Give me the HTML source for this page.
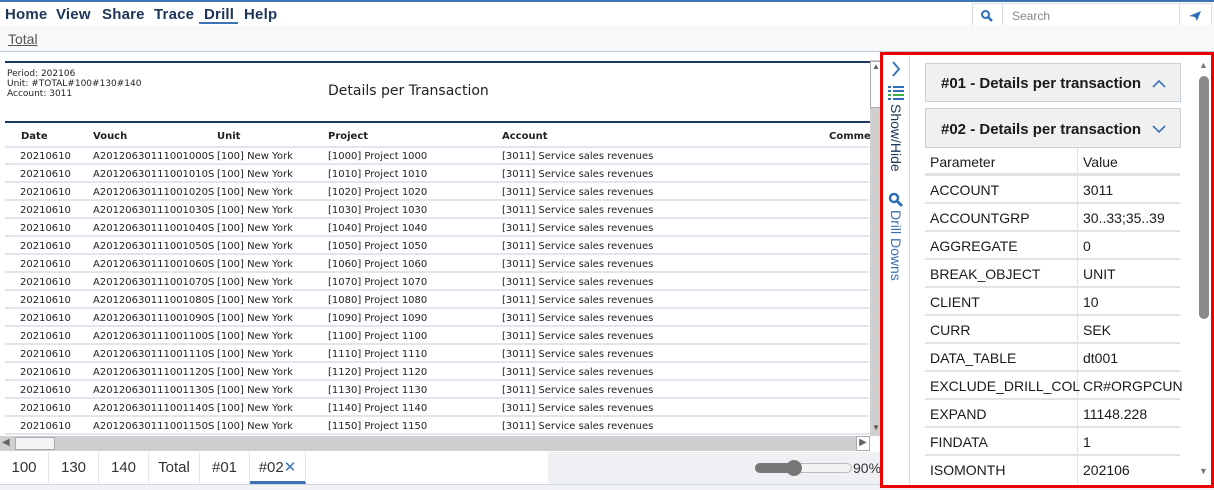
<!DOCTYPE html>
<html><head><meta charset="utf-8"><style>
*{box-sizing:border-box;margin:0;padding:0}
body{width:1214px;height:490px;overflow:hidden;background:#fff;font-family:"Liberation Sans",sans-serif;position:relative}
.abs{position:absolute}
.menu span{position:absolute;top:6px;font-size:15px;font-weight:bold;color:#1d3557;letter-spacing:.2px}
.rep{font-family:"DejaVu Sans",sans-serif;font-size:10px;color:#222}
.row{position:absolute;left:5px;width:864px;height:18px;border-bottom:2px solid #dfe6ee}
.row span{position:absolute;top:4px;white-space:nowrap}
.ptab{position:absolute;left:925px;width:255px;height:28px;border-bottom:2px solid #e3e3e3;font-size:14px;color:#1a1a1a}
.ptab span{position:absolute;top:6px;left:5px}
.ptab span+span{left:158px}
.tab{position:absolute;top:452px;height:32px;border-right:1px solid #e2e6ea;font-size:15px;color:#333;text-align:center;line-height:32px}
.acc{position:absolute;left:925px;width:256px;background:#f0f0f0;border:1px solid #c9d2dc;font-size:15px;font-weight:bold;color:#1a1a1a;padding-left:15px}
</style></head><body>
<div class="abs" style="left:0;top:0;width:1214px;height:2px;background:#3d72b3"></div>
<div class="menu">
<span style="left:5px">Home</span><span style="left:56px">View</span><span style="left:102px">Share</span><span style="left:154px">Trace</span><span style="left:204px">Drill</span><span style="left:244px">Help</span>
</div>
<div class="abs" style="left:199px;top:22px;width:39px;height:2px;background:#3d72b3"></div>
<div class="abs" style="left:972px;top:3px;width:240px;height:25px;border:1px solid #d6dde5;background:#fff"></div>
<div class="abs" style="left:1002px;top:3px;width:1px;height:25px;background:#d6dde5"></div>
<div class="abs" style="left:1179px;top:3px;width:1px;height:25px;background:#d6dde5"></div>
<svg class="abs" style="left:980px;top:9px" width="14" height="14" viewBox="0 0 14 14"><circle cx="5.5" cy="5.5" r="3.5" fill="none" stroke="#2f6fb8" stroke-width="2"/><path d="M8 8l4 4" stroke="#2f6fb8" stroke-width="2.5"/></svg>
<div class="abs" style="left:1012px;top:9px;font-size:12px;color:#888">Search</div>
<svg class="abs" style="left:1189px;top:11px" width="12" height="10" viewBox="0 0 12 10"><path d="M0 5L12 0L8 10L6 6Z" fill="#2f6fb8"/></svg>
<div class="abs" style="left:0;top:25px;width:1214px;height:27px;background:#f7f8fa;border-bottom:1px solid #bccbdc"></div>
<div class="abs" style="left:8px;top:31px;font-size:14px;color:#555;text-decoration:underline">Total</div>

<div class="rep">
<div class="abs" style="left:5px;top:61px;width:865px;height:2px;background:#1c3a63"></div>
<div class="abs" style="left:7px;top:69px;line-height:10px;font-size:9px">Period: 202106<br>Unit: #TOTAL#100#130#140<br>Account: 3011</div>
<div class="abs" style="left:328px;top:83px;font-size:14px">Details per Transaction</div>
<div class="abs" style="left:5px;top:121px;width:865px;height:2px;background:#1c3a63"></div>
<div class="row" style="top:129px;height:19px;font-weight:bold"><span style="left:16px;top:2px">Date</span><span style="left:88px;top:2px">Vouch</span><span style="left:212px;top:2px">Unit</span><span style="left:323px;top:2px">Project</span><span style="left:497px;top:2px">Account</span><span style="left:824px;top:2px">Comme</span></div>
<div id="rows"></div>
</div>
<script>
var h='';for(var i=0;i<16;i++){var n=1000+i*10;var v=String(n/10).padStart(3,'0');h+='<div class="row" style="top:'+(147+i*18)+'px"><span style="left:15px">20210610</span><span style="left:88px">A2012063011100'+v+'0S</span><span style="left:212px">[100] New York</span><span style="left:323px">['+n+'] Project '+n+'</span><span style="left:497px">[3011] Service sales revenues</span></div>';}
document.getElementById('rows').innerHTML=h;
</script>
<div class="abs" style="left:870px;top:60px;width:12px;height:376px;background:#cfcfcf"></div>
<div class="abs" style="left:870px;top:61px;width:12px;height:47px;background:#fff;border:1px solid #aaa"></div>
<div class="abs" style="left:872px;top:62px;font-size:8px;color:#555">▲</div>
<div class="abs" style="left:872px;top:423px;font-size:8px;color:#555">▼</div>
<div class="abs" style="left:0;top:436px;width:870px;height:15px;background:#cfcfcf"></div>
<div class="abs" style="left:15px;top:437px;width:40px;height:13px;background:#f4f4f4;border:1px solid #aaa"></div>
<div class="abs" style="left:2px;top:437px;font-size:10px;color:#666">◀</div>
<div class="abs" style="left:856px;top:436px;width:14px;height:15px;background:#fff;border:1px solid #aaa;font-size:10px;color:#666;text-align:center">▶</div>

<div class="abs" style="left:548px;top:452px;width:332px;height:32px;background:#eef0f3"></div>
<div class="tab" style="left:0;width:49px">100</div>
<div class="tab" style="left:49px;width:50px">130</div>
<div class="tab" style="left:99px;width:50px">140</div>
<div class="tab" style="left:149px;width:51px">Total</div>
<div class="tab" style="left:200px;width:50px">#01</div>
<div class="tab" style="left:250px;width:56px;border-bottom:3px solid #3d72b3">#02<span style="color:#3d72b3">✕</span></div>
<div class="abs" style="left:755px;top:463px;width:97px;height:10px;border-radius:5px;background:#f2f2f2;border:1px solid #bbb"></div>
<div class="abs" style="left:755px;top:463px;width:38px;height:10px;border-radius:5px;background:#777"></div>
<div class="abs" style="left:786px;top:460px;width:16px;height:16px;border-radius:8px;background:#777"></div>
<div class="abs" style="left:853px;top:460px;font-size:14px;color:#333">90%</div>
<div class="abs" style="left:0;top:484px;width:1214px;height:6px;background:#f0f2f5;border-top:1px solid #cfd6df"></div>

<div class="abs" style="left:880px;top:52px;width:334px;height:436px;border:3px solid #e00;background:#fff"></div>
<div class="abs" style="left:909px;top:55px;width:1px;height:430px;background:#d6dde5"></div>
<svg class="abs" style="left:890px;top:60px" width="12" height="18" viewBox="0 0 12 18"><path d="M3 2l6 7-6 7" fill="none" stroke="#2f6fb8" stroke-width="1.8"/></svg>
<svg class="abs" style="left:888px;top:85px" width="16" height="16" viewBox="0 0 16 16"><g fill="#2f6fb8"><rect x="0" y="1" width="3" height="2"/><rect x="5" y="1" width="11" height="2"/><rect x="0" y="5" width="3" height="2"/><rect x="5" y="5" width="11" height="2"/></g><g fill="#3cb043"><rect x="0" y="9" width="3" height="2"/><rect x="5" y="9" width="11" height="2"/></g><g fill="#2f6fb8"><rect x="0" y="13" width="3" height="2"/><rect x="5" y="13" width="11" height="2"/></g></svg>
<div class="abs" style="left:888px;top:104px;writing-mode:vertical-rl;font-size:14px;color:#1d3557">Show/Hide</div>
<svg class="abs" style="left:888px;top:192px" width="16" height="16" viewBox="0 0 16 16"><circle cx="6" cy="6" r="4" fill="none" stroke="#2f6fb8" stroke-width="2.5"/><path d="M9 9l5 5" stroke="#2f6fb8" stroke-width="3"/></svg>
<div class="abs" style="left:888px;top:210px;writing-mode:vertical-rl;font-size:14px;color:#3d72b3">Drill Downs</div>

<div class="acc" style="top:63px;height:39px;padding-top:11px">#01 - Details per transaction</div>
<svg class="abs" style="left:1152px;top:79px" width="14" height="10" viewBox="0 0 14 10"><path d="M1 8l6-6 6 6" fill="none" stroke="#3d72b3" stroke-width="1.6"/></svg>
<div class="acc" style="top:108px;height:40px;padding-top:12px">#02 - Details per transaction</div>
<svg class="abs" style="left:1152px;top:124px" width="14" height="10" viewBox="0 0 14 10"><path d="M1 2l6 6 6-6" fill="none" stroke="#3d72b3" stroke-width="1.6"/></svg>
<div class="abs" style="left:1077px;top:148px;width:1px;height:336px;background:#e0e0e0"></div>
<div class="ptab" style="top:148px;border-bottom:3px solid #e0e0e0"><span>Parameter</span><span>Value</span></div>
<div class="ptab" style="top:176px"><span>ACCOUNT</span><span>3011</span></div>
<div class="ptab" style="top:204px"><span>ACCOUNTGRP</span><span>30..33;35..39</span></div>
<div class="ptab" style="top:232px"><span>AGGREGATE</span><span>0</span></div>
<div class="ptab" style="top:260px"><span>BREAK_OBJECT</span><span>UNIT</span></div>
<div class="ptab" style="top:288px"><span>CLIENT</span><span>10</span></div>
<div class="ptab" style="top:316px"><span>CURR</span><span>SEK</span></div>
<div class="ptab" style="top:344px"><span>DATA_TABLE</span><span>dt001</span></div>
<div class="ptab" style="top:372px"><span>EXCLUDE_DRILL_COL</span><span>CR#ORGPCUN</span></div>
<div class="ptab" style="top:400px"><span>EXPAND</span><span>11148.228</span></div>
<div class="ptab" style="top:428px"><span>FINDATA</span><span>1</span></div>
<div class="ptab" style="top:456px;border:none"><span>ISOMONTH</span><span>202106</span></div>
<div class="abs" style="left:1199px;top:76px;width:10px;height:243px;border-radius:5px;background:#8a8a8a"></div>
<div class="abs" style="left:1199px;top:60px;font-size:9px;color:#777">▲</div>
<div class="abs" style="left:1199px;top:466px;font-size:9px;color:#777">▼</div>
</body></html>
